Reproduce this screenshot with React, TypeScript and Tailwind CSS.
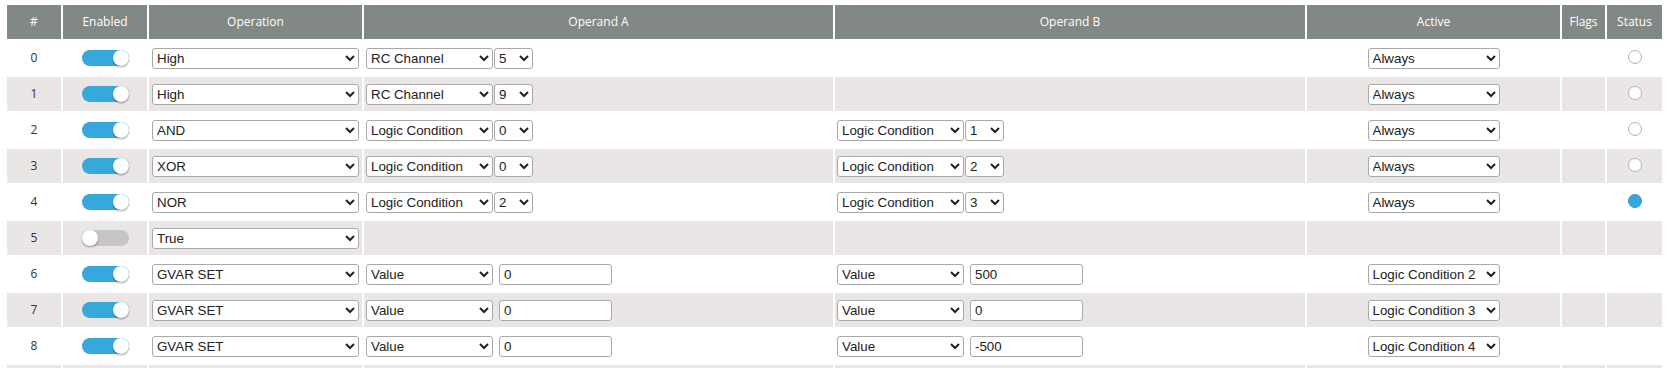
import React from 'react';

type Operand =
  | { kind: 'pair'; type: string; value: string }
  | { kind: 'value'; value: string }
  | null;

interface Row {
  id: number;
  enabled: boolean;
  op: string;
  a: Operand;
  b: Operand;
  active: string | null;
  status: 'off' | 'on' | null;
}

const rows: Row[] = [
  { id: 0, enabled: true, op: 'High', a: { kind: 'pair', type: 'RC Channel', value: '5' }, b: null, active: 'Always', status: 'off' },
  { id: 1, enabled: true, op: 'High', a: { kind: 'pair', type: 'RC Channel', value: '9' }, b: null, active: 'Always', status: 'off' },
  { id: 2, enabled: true, op: 'AND', a: { kind: 'pair', type: 'Logic Condition', value: '0' }, b: { kind: 'pair', type: 'Logic Condition', value: '1' }, active: 'Always', status: 'off' },
  { id: 3, enabled: true, op: 'XOR', a: { kind: 'pair', type: 'Logic Condition', value: '0' }, b: { kind: 'pair', type: 'Logic Condition', value: '2' }, active: 'Always', status: 'off' },
  { id: 4, enabled: true, op: 'NOR', a: { kind: 'pair', type: 'Logic Condition', value: '2' }, b: { kind: 'pair', type: 'Logic Condition', value: '3' }, active: 'Always', status: 'on' },
  { id: 5, enabled: false, op: 'True', a: null, b: null, active: null, status: null },
  { id: 6, enabled: true, op: 'GVAR SET', a: { kind: 'value', value: '0' }, b: { kind: 'value', value: '500' }, active: 'Logic Condition 2', status: null },
  { id: 7, enabled: true, op: 'GVAR SET', a: { kind: 'value', value: '0' }, b: { kind: 'value', value: '0' }, active: 'Logic Condition 3', status: null },
  { id: 8, enabled: true, op: 'GVAR SET', a: { kind: 'value', value: '0' }, b: { kind: 'value', value: '-500' }, active: 'Logic Condition 4', status: null },
];

const ops = ['True', 'Equal', 'Greater Than', 'Lower Than', 'Low', 'Mid', 'High', 'AND', 'OR', 'XOR', 'NAND', 'NOR', 'NOT', 'GVAR SET'];
const types = ['Value', 'RC Channel', 'Flight', 'Flight Mode', 'Logic Condition', 'Global Variable'];
const nums = ['0', '1', '2', '3', '4', '5', '6', '7', '8', '9'];
const actives = ['Always', 'Logic Condition 0', 'Logic Condition 1', 'Logic Condition 2', 'Logic Condition 3', 'Logic Condition 4'];

function Select({ value, options, className }: { value: string; options: string[]; className: string }) {
  return (
    <select
      defaultValue={value}
      className={
        "h-[21px] rounded-[3px] border border-[#a9a9a9] bg-white text-[13.333px] font-normal leading-normal text-[#222] font-['Liberation_Sans',Arial,sans-serif] " +
        className
      }
    >
      {options.map((o) => (
        <option key={o} value={o}>
          {o}
        </option>
      ))}
    </select>
  );
}

function Switch({ on }: { on: boolean }) {
  return (
    <span
      className={
        on
          ? 'inline-flex h-[16px] w-[47px] items-center justify-end rounded-full bg-[#37a8db] align-middle'
          : 'inline-flex h-[16px] w-[47px] items-center justify-start rounded-full bg-[#c6c6c6] align-middle'
      }
    >
      <span className="h-[16px] w-[16px] rounded-full bg-white shadow-[0_1px_2px_rgba(0,0,0,0.4)]" />
    </span>
  );
}

function OperandCell({ operand }: { operand: Operand }) {
  if (!operand) return null;
  if (operand.kind === 'pair') {
    return (
      <div className="flex items-center pl-[2px]">
        <Select value={operand.type} options={types} className="w-[127px]" />
        <Select value={operand.value} options={nums} className="ml-[1px] w-[39px]" />
      </div>
    );
  }
  return (
    <div className="flex items-center pl-[2px]">
      <Select value="Value" options={types} className="w-[127px]" />
      <input
        defaultValue={operand.value}
        className="ml-[6px] h-[21px] w-[113px] rounded-[3px] border border-[#a9a9a9] bg-white px-[4px] text-[13.333px] font-normal text-[#222] font-['Liberation_Sans',Arial,sans-serif]"
      />
    </div>
  );
}

const cellBase = 'h-[34px] p-0 align-middle ';

export default function App() {
  return (
    <div className="h-[368px] w-[1668px] overflow-hidden bg-white font-['Open_Sans',sans-serif]">
      <table className="ml-[5px] mt-[3px] w-[1659px] table-fixed border-separate border-spacing-[2px]">
        <thead>
          <tr>
            <th className="h-[34px] w-[54px] bg-[#828885] text-center text-[12px] font-normal text-white">#</th>
            <th className="h-[34px] w-[84px] bg-[#828885] text-center text-[12px] font-normal text-white">Enabled</th>
            <th className="h-[34px] w-[213px] bg-[#828885] text-center text-[12px] font-normal text-white">Operation</th>
            <th className="h-[34px] w-[469px] bg-[#828885] text-center text-[12px] font-normal text-white">Operand A</th>
            <th className="h-[34px] w-[470px] bg-[#828885] text-center text-[12px] font-normal text-white">Operand B</th>
            <th className="h-[34px] w-[253px] bg-[#828885] text-center text-[12px] font-normal text-white">Active</th>
            <th className="h-[34px] w-[43px] bg-[#828885] text-center text-[12px] font-normal text-white">Flags</th>
            <th className="h-[34px] w-[55px] bg-[#828885] text-center text-[12px] font-normal text-white">Status</th>
          </tr>
        </thead>
        <tbody>
          {rows.map((r) => {
            const bg = r.id % 2 === 1 ? 'bg-[#e9e6e5]' : 'bg-white';
            return (
              <tr key={r.id}>
                <td className={cellBase + 'text-center text-[12px] text-[#333] ' + bg}>{r.id}</td>
                <td className={cellBase + 'text-center ' + bg}>
                  <div className="flex items-center justify-center pl-[1px]">
                    <Switch on={r.enabled} />
                  </div>
                </td>
                <td className={cellBase + bg}>
                  <div className="flex items-center pl-[3px]">
                    <Select value={r.op} options={ops} className="w-[207px]" />
                  </div>
                </td>
                <td className={cellBase + bg}>
                  <OperandCell operand={r.a} />
                </td>
                <td className={cellBase + bg}>
                  <OperandCell operand={r.b} />
                </td>
                <td className={cellBase + bg}>
                  {r.active && (
                    <div className="flex items-center justify-center">
                      <Select value={r.active} options={actives} className="w-[132px]" />
                    </div>
                  )}
                </td>
                <td className={cellBase + bg} />
                <td className={cellBase + bg}>
                  {r.status && (
                    <div className="flex items-center justify-center pb-[2px] pl-[1px]">
                      <span
                        className={
                          r.status === 'on'
                            ? 'h-[14px] w-[14px] rounded-full border border-[#3199c9] bg-[#37a8db]'
                            : 'h-[14px] w-[14px] rounded-full border border-[#b5b5b5] bg-white'
                        }
                      />
                    </div>
                  )}
                </td>
              </tr>
            );
          })}
          <tr>
            <td className="h-[34px] bg-[#e9e6e5] p-0" />
            <td className="h-[34px] bg-[#e9e6e5] p-0" />
            <td className="h-[34px] bg-[#e9e6e5] p-0" />
            <td className="h-[34px] bg-[#e9e6e5] p-0" />
            <td className="h-[34px] bg-[#e9e6e5] p-0" />
            <td className="h-[34px] bg-[#e9e6e5] p-0" />
            <td className="h-[34px] bg-[#e9e6e5] p-0" />
            <td className="h-[34px] bg-[#e9e6e5] p-0" />
          </tr>
        </tbody>
      </table>
    </div>
  );
}
